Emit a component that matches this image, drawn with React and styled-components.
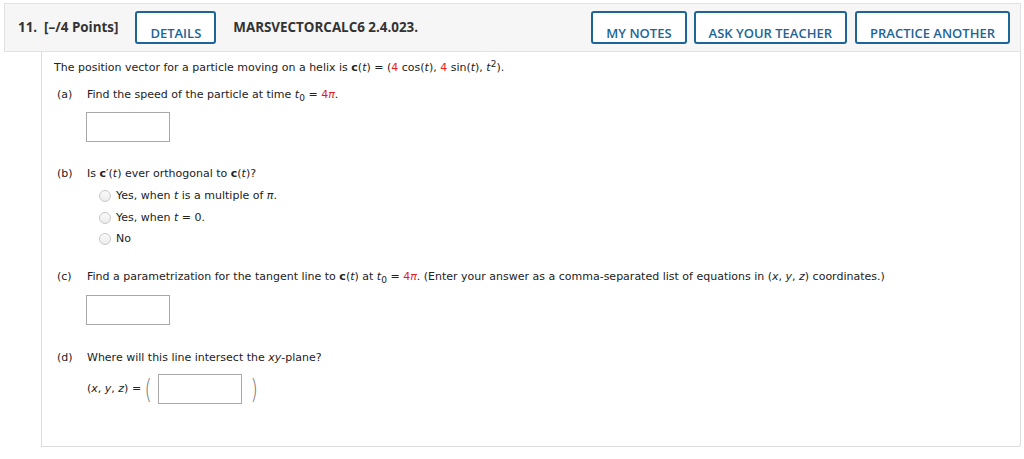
import React from "react";
import styled, { createGlobalStyle } from "styled-components";

const Global = createGlobalStyle`
  html, body { margin: 0; padding: 0; background: #fff; }
  body { font-family: "DejaVu Sans", Verdana, sans-serif; color: #222; }
`;

const Page = styled.div`
  padding: 3px 3px 0 4px;
  width: 1017px;
`;

const Header = styled.div`
  height: 47px;
  display: flex;
  align-items: center;
  background: #f6f6f6;
  border: 1px solid #e2e2e2;
  padding: 0 10px 0 13px;
  font-family: "Open Sans", sans-serif;
`;

const HeadText = styled.span`
  font-size: 13.4px;
  font-weight: 700;
  color: #333;
  margin-right: 17px;
  white-space: nowrap;
  padding-bottom: 2px;
`;

const Spacer = styled.div`
  flex: 1;
`;

const Btn = styled.button`
  height: 33px;
  box-sizing: border-box;
  border: 2px solid #1d6596;
  border-radius: 3px;
  background: #fff;
  color: #1d6596;
  font-family: "Open Sans", sans-serif;
  font-weight: 600;
  font-size: 13px;
  padding: 10px 13px 0;
  margin: 0 ${(p) => p.$mr || 0}px 0 0;
  white-space: nowrap;
  line-height: 18px;
`;

const Panel = styled.div`
  margin-left: 37px;
  border-left: 1px solid #dcdcdc;
  border-right: 1px solid #dcdcdc;
  border-bottom: 1px solid #dcdcdc;
  border-bottom-right-radius: 3px;
  padding: 8px 12px 42px 12px;
  font-size: 11px;
  line-height: 16px;
  display: flex;
  flex-direction: column;
  align-items: flex-start;
`;

const Line = styled.div`
  margin-top: ${(p) => p.$mt || 0}px;
  white-space: nowrap;
  display: flex;
  align-items: center;
`;

const Label = styled.span`
  display: inline-block;
  width: 30px;
  padding-left: 3px;
`;

const Red = styled.span`
  color: #e31b1b;
`;

const B = styled.b`
  font-weight: 700;
`;

const Sub = styled.sub`
  font-size: 9px;
  line-height: 0;
  vertical-align: -3px;
`;

const Sup = styled.sup`
  font-size: 9px;
  line-height: 0;
  vertical-align: 4px;
`;

const Answer = styled.div`
  box-sizing: border-box;
  width: ${(p) => p.$w || 84}px;
  height: 30px;
  border: 1px solid #a9a9a9;
  background: #fff;
  margin-top: ${(p) => p.$mt || 0}px;
  margin-left: ${(p) => p.$ml || 0}px;
`;

const Options = styled.div`
  display: flex;
  flex-direction: column;
  gap: 5.5px;
  margin-top: 6px;
  margin-left: 45px;
`;

const Option = styled.label`
  display: flex;
  align-items: center;
  height: 16px;
  white-space: nowrap;
`;

const Radio = styled.span`
  box-sizing: border-box;
  width: 12px;
  height: 12px;
  border-radius: 50%;
  border: 1px solid #c8c8c8;
  background: linear-gradient(#fafafa, #ececec);
  margin-right: 5px;
`;

const EqRow = styled.div`
  display: flex;
  align-items: center;
  margin-top: 8px;
  margin-left: 33px;
  white-space: nowrap;
`;

const Paren = styled.span`
  font-size: 27px;
  font-weight: 200;
  color: #777;
  line-height: 30px;
  margin: ${(p) => p.$m};
  transform: scaleX(0.7);
  display: inline-block;
`;

export default function App() {
  return (
    <>
      <Global />
      <Page>
        <Header>
          <HeadText>11.&nbsp; [–/4 Points]</HeadText>
          <Btn $mr={17}>DETAILS</Btn>
          <HeadText>MARSVECTORCALC6 2.4.023.</HeadText>
          <Spacer />
          <Btn $mr={7}>MY NOTES</Btn>
          <Btn $mr={8}>ASK YOUR TEACHER</Btn>
          <Btn>PRACTICE ANOTHER</Btn>
        </Header>
        <Panel>
          <Line>
            <span>
              The position vector for a particle moving on a helix is <B>c</B>(<i>t</i>) = (<Red>4</Red> cos(<i>t</i>), <Red>4</Red> sin(<i>t</i>), <i>t</i>
              <Sup>2</Sup>).
            </span>
          </Line>
          <Line $mt={11}>
            <Label>(a)</Label>
            <span>
              Find the speed of the particle at time <i>t</i>
              <Sub>0</Sub> = <Red>4<i>π</i></Red>.
            </span>
          </Line>
          <Answer $mt={9} $ml={32} />

          <Line $mt={24}>
            <Label>(b)</Label>
            <span>
              Is <B>c</B>′(<i>t</i>) ever orthogonal to <B>c</B>(<i>t</i>)?
            </span>
          </Line>
          <Options>
            <Option>
              <Radio />
              Yes, when&nbsp;<i>t</i>&nbsp;is a multiple of&nbsp;<i>π</i>.
            </Option>
            <Option>
              <Radio />
              Yes, when&nbsp;<i>t</i>&nbsp;= 0.
            </Option>
            <Option>
              <Radio />
              No
            </Option>
          </Options>

          <Line $mt={22}>
            <Label>(c)</Label>
            <span>
              Find a parametrization for the tangent line to <B>c</B>(<i>t</i>) at <i>t</i>
              <Sub>0</Sub> = <Red>4<i>π</i></Red>. (Enter your answer as a comma-separated list of equations in (<i>x</i>, <i>y</i>, <i>z</i>) coordinates.)
            </span>
          </Line>
          <Answer $mt={10} $ml={32} />

          <Line $mt={25}>
            <Label>(d)</Label>
            <span>
              Where will this line intersect the <i>xy</i>-plane?
            </span>
          </Line>
          <EqRow>
            <span>
              (<i>x</i>, <i>y</i>, <i>z</i>) =
            </span>
            <Paren $m="0 4px 0 2px">(</Paren>
            <Answer $w={84} />
            <Paren $m="0 0 0 7px">)</Paren>
          </EqRow>
        </Panel>
      </Page>
    </>
  );
}
